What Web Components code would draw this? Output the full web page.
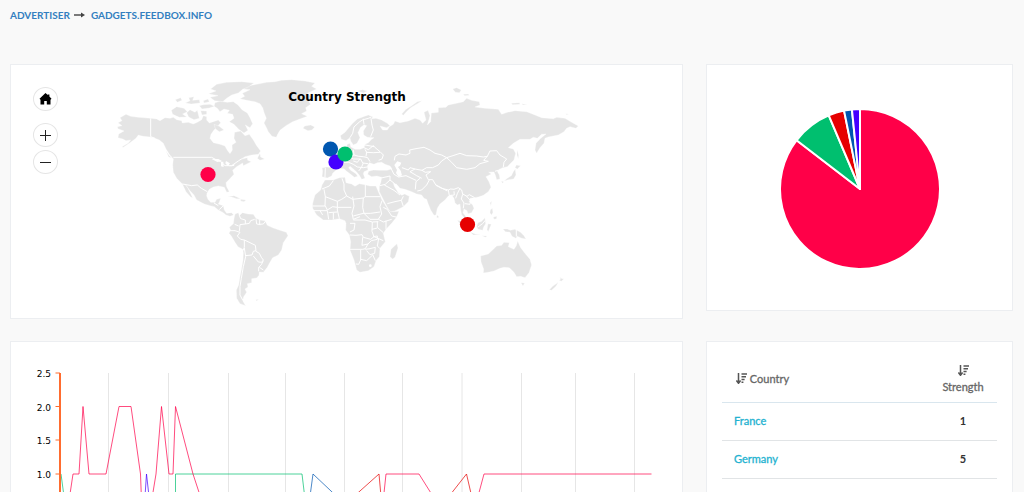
<!DOCTYPE html>
<html lang="en">
<head>
  <meta charset="UTF-8">
  <meta name="viewport" content="width=device-width, initial-scale=1.0">
  <title>Advertiser - gadgets.feedbox.info</title>
  <style>
    body {
      margin: 0;
      background: #f9f9f9;
      font-family: Lato, "Liberation Sans", sans-serif;
      font-size: 11px;
      color: #333;
    }
  </style>
</head>
<body>
  <advertiser-page>
    <bread-crumb slot="header">
      <a href="#advertiser">ADVERTISER</a>
      <a href="#gadgets">GADGETS.FEEDBOX.INFO</a>
    </bread-crumb>
    <panel-card><country-map heading="Country Strength"></country-map></panel-card>
    <panel-card><pie-chart></pie-chart></panel-card>
    <panel-card><line-chart></line-chart></panel-card>
    <panel-card><country-table></country-table></panel-card>
  </advertiser-page>

  <template id="page-template">
    <style>
      :host { display: block; height: 100vh; overflow: auto; scrollbar-width: none; }
      header { height: 64px; padding: 0 10px; box-sizing: border-box; }
      main {
        display: grid;
        grid-template-columns: 673fr 307fr;
        column-gap: 23px;
        row-gap: 22px;
        align-items: start;
        padding: 0 11px 24px 10px;
      }
    </style>
    <header><slot name="header"></slot></header>
    <main><slot></slot></main>
  </template>

  <template id="crumb-template">
    <style>
      :host { display: block; }
      nav { display: flex; align-items: center; height: 29px; font-size: 10px; font-weight: 700; }
      ::slotted(a) { color: #337fc0; text-decoration: none; }
      nav svg { margin: 0 6px 0 4px; }
    </style>
    <nav aria-label="Breadcrumb">
      <slot name="first"></slot>
      <svg width="11" height="8" viewBox="0 0 11 8" aria-hidden="true">
        <path d="M0 4h9" stroke="#444" stroke-width="1.4"/>
        <path d="M7 1.5L11 4 7 6.5z" fill="#444"/>
      </svg>
      <slot></slot>
    </nav>
  </template>

  <template id="card-template">
    <style>
      :host { display: block; background: #fff; border: 1px solid #eceef1; min-width: 0; }
    </style>
    <slot></slot>
  </template>

  <template id="map-template">
    <style>
      :host { display: block; position: relative; }
      .map { display: block; width: 100%; height: auto; }
      .land { fill: #e5e5e5; stroke: #fff; stroke-width: 1; stroke-linejoin: round; }
      .line { fill: none; stroke: #fff; stroke-width: 3; }
      .sea { fill: #fff; stroke: none; }
      text { font: bold 12px "DejaVu Sans", sans-serif; text-anchor: middle; fill: #000; }
      .controls { position: absolute; left: 22px; top: 22px; display: grid; gap: 3px; }
      button {
        width: 25px; height: 24px; padding: 0;
        display: flex; align-items: center; justify-content: center;
        background: #fff; border: 1px solid #e5e5e5; border-radius: 50%;
      }
      .home { margin-bottom: 9px; }
    </style>
    <svg class="map" viewBox="11 65 671 253" role="img" aria-label="World map">
      <g class="land">
        <!-- north america -->
        <g transform="translate(110 75) scale(.3333)">
          <path d="M22 155L36 152 24 143 36 137 30 128 48 118 62 124 85 127 122 130 140 132 150 137 165 128 180 130 190 127 200 134 215 137 217 144 235 142 250 147 262 142 275 134 280 122 290 125 290 135 298 144 310 140 325 135 332 143 322 155 312 165 303 178 300 190 310 203 330 208 345 213 352 226 360 236 367 225 366 210 378 202 372 190 374 172 392 168 405 182 418 178 430 195 440 212 452 228 445 238 425 240 405 245 393 253 412 248 413 256 424 260 412 266 400 272 398 264 380 275 368 286 372 298 358 313 348 323 350 335 358 350 350 352 343 337 325 333 310 336 298 343 291 355 290 363 294 373 302 382 315 382 320 373 332 370 328 382 325 387 340 392 343 405 350 415 365 413 371 420 360 424 348 420 340 413 325 405 313 395 300 392 283 387 260 375 252 360 240 347 225 327 234 340 248 368 242 366 228 350 217 327 200 310 190 292 188 270 190 252 178 238 168 222 160 205 148 195 135 190 120 186 100 184 92 182 85 180 78 190 60 203 40 217 35 216 55 204 62 195 48 197 38 192 24 188 26 177 42 168 24 161z"/>
          <path d="M397 55L420 44 400 42 412 33 440 28 470 22 495 20 515 16 545 14 585 18 615 24 605 34 620 42 592 55 606 65 596 78 602 88 587 98 590 108 575 116 592 124 570 132 548 140 528 152 510 166 503 178 499 187 486 184 475 170 468 155 462 144 469 130 463 115 458 98 450 86 435 80 410 76 390 71 404 64z"/>
          <path d="M295 56L318 48 302 42 320 28 350 22 395 20 432 24 415 36 398 43 385 54 365 60 350 70 338 80 314 77 300 67 324 62z"/>
          <path d="M184 106L200 95 222 100 232 110 218 117 230 126 208 127 188 118zM230 113L240 104 255 112 262 106 268 130 252 134 236 126zM315 83L330 79 352 82 370 80 384 90 396 104 412 114 420 128 428 146 420 158 406 150 414 166 402 174 386 163 372 148 358 140 372 130 368 118 352 115 358 106 342 102 330 110 322 100 312 94zM268 92L280 89 300 88 314 94 298 99 276 102zM196 74L212 68 216 76 202 82zM236 68L252 65 248 76 268 74 270 84 244 87 226 84 240 77zM280 77L294 72 298 80 282 84zM312 148L328 154 342 165 328 170 316 161zM272 107L290 108 290 118 276 120zM442 250L450 235 452 246 464 252 450 256zM22 144L8 148M168 228L178 242 186 248 176 246z"/>
          <path d="M579 160L584 153 602 150 614 156 606 165 594 167zM352 365L372 362 392 371 380 371 365 366zM392 373L408 375 402 380 392 378z"/>
          <path class="line" d="M122 130V185L135 190M190 247H305L318 254 332 260 345 272 365 272 385 258 394 252M217 327L245 332 262 330 274 340 292 350M312 384L325 392M340 392L328 404"/>
          <path class="sea" d="M305 252L325 252 336 258 322 261zM333 260L340 260 341 276 333 274zM348 258L360 265 354 274 346 265zM356 274L374 268 372 273z"/>
        </g>
        <!-- south america -->
        <g transform="translate(210 190) scale(.3333)">
          <path d="M75 72L85 68 88 77 97 68 115 72 130 73 138 85 150 90 165 92 172 106 190 114 210 121 229 127 234 137 220 158 215 180 205 195 188 203 180 217 172 232 160 247 148 246 147 256 140 264 125 266 125 278 112 281 114 291 105 297 110 307 101 320 98 332 107 347 90 341 80 325 79 300 86 285 90 260 95 235 99 210 100 188 98 178 84 170 75 157 64 138 57 130 62 120 58 112 70 101 72 86zM137 329L146 328 140 333z"/>
          <path class="line" d="M88 76L92 86 106 90 106 102 90 104 88 124M60 122L75 122 90 127 82 138 92 148 103 150 103 172 99 182M106 102L118 100 122 92 134 88M138 86L140 102 151 104M149 88V103L160 102 167 93M103 150L120 158 136 166 138 182 130 184 126 195 105 197M138 184L148 190 154 202 160 210 155 217 145 216 130 198M160 212L154 224 146 232 146 244M103 174L107 200 100 230 94 265 90 290 90 315 98 330M74 103L86 108M148 232L160 240"/>
        </g>
        <!-- europe and asia -->
        <g transform="translate(300 75) scale(.3333)">
          <path d="M66 305L68 287 66 279 80 276 98 278 99 262 88 250 105 248 115 240 125 228 138 222 142 208 150 205 152 215 165 223 180 223 192 218 195 208 205 203 215 193 222 188 202 187 191 180 190 168 200 152 192 149 181 158 174 173 180 188 171 205 160 210 152 198 150 188 138 197 124 193 121 182 135 172 145 160 158 145 172 132 190 125 205 120 218 125 216 131 228 130 245 135 262 145 270 152 260 158 240 153 248 165 262 165 268 155 280 148 285 138 300 143 325 138 345 130 360 135 368 145 378 135 372 112 384 106 390 122 382 150 392 140 394 114 415 112 415 98 438 97 445 90 470 85 490 80 500 70 515 76 538 80 540 90 525 96 555 100 595 103 605 118 622 112 645 107 680 110 705 120 725 128 760 131 770 127 795 130 815 142 835 153 828 160 810 155 800 160 792 170 775 180 745 186 735 190 732 205 720 218 710 235 705 225 708 205 720 192 738 177 725 178 712 190 700 187 690 193 660 193 640 205 625 218 640 222 647 235 642 255 622 275 608 278 596 284 592 289 598 300 600 312 590 314 586 300 582 291 566 292 574 297 558 305 567 320 573 337 565 350 550 361 535 366 524 368 511 370 508 380 518 390 522 400 515 413 504 416 501 407 492 402 489 413 496 422 503 435 495 431 485 419 482 405 480 387 472 390 465 383 462 370 455 360 445 363 435 375 420 387 412 400 408 420 402 421 392 405 384 385 380 373 372 370 365 360 350 357 335 350 315 343 300 340 290 328 280 325 284 336 295 353 305 361 314 357 328 364 325 380 310 395 285 408 271 412 258 390 248 370 238 350 238 335 243 320 245 307 230 303 215 305 203 298 206 289 220 285 240 286 262 286 276 281 270 273 255 268 245 262 232 263 222 268 208 263 202 273 204 285 192 290 190 296 195 310 185 313 178 301 170 291 160 282 150 274 146 278 152 286 168 296 173 304 163 307 152 298 140 289 132 281 118 281 108 286 98 295 95 303 82 309z"/>
          <path d="M305 117L318 103 335 92 352 80 366 77 352 86 332 98 318 112 310 121zM100 219L95 232 88 247 108 241 107 228zM78 232L90 230 88 240 78 242zM172 47L188 44 202 48 190 54zM285 48L298 49 290 52zM458 42L470 38 484 45 478 53 466 52zM490 58L505 57 508 61 494 62zM634 85L658 83 660 88 638 89zM666 86L682 89 668 90zM797 116L806 117 800 119zM651 224L656 240 655 252 651 240zM649 270L662 272 652 282 645 278zM646 282L648 300 641 312 625 314 612 318 622 310 634 302 640 290zM604 318L612 320 607 325zM570 384L575 378 573 392zM571 405L577 400 579 412 575 420 570 414zM580 426L591 424 589 432 582 433z"/>
          <path d="M411 420L416 424 415 430 410 427zM472 436L482 438 495 448 508 462 507 468 492 458 480 446zM510 471L528 478 542 480 520 480zM530 454L534 443 545 439 555 428 557 446 551 456 548 466 534 463zM564 446L574 448 568 462 565 470 561 464zM609 462L622 462 631 466 645 463 662 472 672 482 678 492 665 490 652 484 648 490 636 484 630 472 616 470zM546 482L562 483 556 487z"/>
          <path d="M542 543L565 537 580 523 590 513 605 511 612 502 628 503 625 515 642 523 649 512 653 498 662 518 675 535 690 553 695 570 687 593 675 608 662 604 650 605 642 592 636 586 628 578 612 577 600 580 582 588 565 592 550 594 551 582 543 560zM663 623L674 624 669 633zM779 606L786 611 792 611 784 619 778 616 782 612zM775 622L768 634 755 646 748 644 758 634z"/>
          <path class="sea" d="M283 270L292 259 304 263 300 272 294 276 302 287 306 301 296 305 288 294 291 285z"/>
          <path class="line" d="M150 188L158 175 162 156 178 141 192 132M192 148L190 134 205 130 214 126M213 130L216 150 220 165 212 185M195 210L212 213 222 215M195 223L200 232 198 244M192 218L205 224 220 212 228 220 240 230 250 240 246 252 236 256M160 224L162 240 176 244 190 245 203 248 210 260M162 240L152 246 160 252 182 252 188 264 204 266M118 240L120 252 128 262 146 262 160 268 172 276 190 278 202 276M98 278L112 283M76 279L75 307M180 252L172 262 160 258M190 264L184 278 176 288M198 232L220 233 240 232M283 256L285 244 297 237 318 240 330 235 329 225 348 221 372 217 390 225 405 235 425 240 440 248 465 240 480 235 500 242 530 243 550 246 562 244 570 228 590 227 600 240 620 252 612 262 610 276M440 248L455 262 470 278 500 283 525 278 540 266 565 259 551 256 562 244M440 248L425 258 415 270 398 278 380 278 366 286 345 282 330 278 325 285 306 278M345 282L330 290 350 302 365 310M366 286L376 292 392 290 378 300 385 314 398 314 408 331 425 340 445 345 452 342 462 343 475 338 485 345 488 357 501 364 508 359 524 368M360 310L348 320 346 343M388 315L380 330 365 345 352 348M408 330L442 348M445 345L448 362 463 360 462 349M480 340L472 356 467 370M488 358L484 372 492 384 490 400M500 364L512 377 510 388 495 386M274 282L282 298 296 306 318 302 348 316M244 309L270 303 270 315 256 328 240 332M270 315L284 326M253 330L282 346 300 360M262 386L285 380 304 376 310 394M304 376L310 364M649 463V485M594 286L585 289M534 456L548 446 556 436"/>
        </g>
        <!-- africa -->
        <g transform="translate(300 170) scale(.3333)">
          <path d="M75 30L100 30 118 23 135 22 138 38 155 42 165 49 178 41 195 44 210 48 228 48 235 65 245 88 262 115 272 125 297 124 290 141 275 160 258 178 250 190 256 215 240 235 238 260 228 272 222 290 205 302 180 307 170 300 162 270 150 240 152 215 148 195 137 180 138 160 135 152 118 146 95 150 70 150 50 135 38 115 38 100 45 75 62 60 66 45zM291 221L294 234 285 262 278 267 270 260 273 238z"/>
          <path class="line" d="M38 108H75L76 80 112 94 125 88 140 78 132 60 132 42 126 25M72 58L76 80M66 57L88 48 100 32M140 78L158 88 190 84 196 80V44M196 80H240M158 80L162 108 156 130 160 148M112 94V112L154 112M112 112L112 120 118 146M76 108L82 120 98 110 112 112M40 122H60L68 135M60 122L82 122 86 148M100 128V148M86 128L112 126M190 84L188 112 192 130 210 148 235 148 245 132 240 110 246 92M190 130L212 130 240 126M160 138L190 130M160 148L180 140M250 112L262 118 275 138 292 142M235 148L250 156 275 148M232 155V172L250 188M218 156L235 155M258 152V178M160 150L195 150 217 156 216 184 222 200 212 208 190 202 186 194 168 196 150 195M150 160H165L162 180 150 186M216 178L232 174M222 200L250 212M188 202L186 226 204 222 214 212 232 208 232 198 220 200M150 238H188L196 236 204 222M182 240V270L176 283 168 282M182 268L200 272 218 255M196 238L210 236 226 232 224 250 210 254 200 242M236 206L232 228 240 236M218 254L226 272"/>
          <circle class="sea" cx="211" cy="287" r="4"/>
        </g>
      </g>
      <text x="347" y="101"></text>
      <g id="dots"></g>
    </svg>
    <div class="controls">
      <button class="home" type="button" aria-label="Home">
        <svg width="13" height="12" viewBox="0 0 13 12"><path d="M6.5 0L8.8 2.1V1.4H10.4V3.6L12.5 5.7 11.5 6.8V11.5H7.8V8H5.2V11.5H1.5V6.8L.5 5.7z"/></svg>
      </button>
      <button type="button" aria-label="Zoom in">
        <svg width="11" height="11" viewBox="0 0 11 11"><path d="M0 5.5H11M5.5 0V11" stroke="#222"/></svg>
      </button>
      <button type="button" aria-label="Zoom out">
        <svg width="11" height="11" viewBox="0 0 11 11"><path d="M0 5.5H11" stroke="#222"/></svg>
      </button>
    </div>
  </template>

  <template id="pie-template">
    <style>
      :host { display: block; padding: 43px 0 40px; }
      svg { display: block; width: 162px; margin: 0 auto; }
      path { stroke: #fff; stroke-width: 2; stroke-linejoin: round; }
    </style>
    <svg viewBox="-81 -81 162 162" role="img" aria-label="Strength by country"></svg>
  </template>

  <template id="line-template">
    <style>
      :host { display: block; }
      svg { display: block; width: 100%; height: auto; }
      .grid { stroke: #e6e6e6; fill: none; }
      .series { fill: none; stroke-opacity: .7; stroke-linejoin: round; }
      .axis { stroke: #ff6c2f; fill: none; }
      text { font: 9px "DejaVu Sans", sans-serif; text-anchor: end; fill: #000; }
    </style>
    <svg viewBox="11 342 671 220" role="img" aria-label="Strength over time">
      <path class="grid"/>
      <g id="series"></g>
      <path class="axis" stroke-width="2" d="M60 373V542"/>
      <g id="scale"></g>
    </svg>
  </template>

  <template id="table-template">
    <style>
      :host { display: block; padding: 15px; }
      table { width: 100%; border-collapse: collapse; table-layout: fixed; }
      th, td {
        height: 35px; padding: 0 12px 2px; text-align: left;
        border-bottom: 1px solid #e1e4e6;
      }
      th { height: 43px; border-bottom-color: #d9e6ee; }
      th:last-child, td:last-child {
        width: 68px; padding-left: 0; padding-right: 0; text-align: center;
      }
      button {
        padding: 0 2px; border: 0; background: none; color: #666;
        font: 11px/16px Lato, sans-serif;
      }
      button, a { -webkit-text-stroke: .3px; }
      td:last-child { font-weight: 700; }
      a { color: #23b2d0; text-decoration: none; }
      svg { vertical-align: -1px; }
      th:last-child button { width: 50px; }
    </style>
    <table>
      <thead><tr></tr></thead>
      <tbody></tbody>
    </table>
  </template>

  <script>
  class TemplateElement extends HTMLElement {
    constructor(id) {
      super();
      this.attachShadow({ mode: 'open' });
      this.shadowRoot.appendChild(document.getElementById(id).content.cloneNode(true));
    }

    find(selector) {
      return this.shadowRoot.querySelector(selector);
    }
  }

  class AdvertiserPage extends TemplateElement {
    constructor() { super('page-template'); }
  }

  class BreadCrumb extends TemplateElement {
    constructor() { super('crumb-template'); }

    connectedCallback() {
      this.querySelector('a').slot = 'first';
    }
  }

  class PanelCard extends TemplateElement {
    constructor() { super('card-template'); }
  }

  class CountryMap extends TemplateElement {
    constructor() { super('map-template'); }

    connectedCallback() {
      this.find('text').textContent = this.getAttribute('heading');
      var dots = [
        [208, 174.5, '#ff0048'],
        [330.5, 149, '#0057b0'],
        [336, 162, '#4400ff'],
        [345, 154, '#00bf6f'],
        [467.5, 224.5, '#e60000']
      ];
      this.find('#dots').innerHTML = dots.map(d =>
        `<circle cx="${d[0]}" cy="${d[1]}" r="7.6" fill="${d[2]}"/>`).join('');
    }
  }

  class PieChart extends TemplateElement {
    constructor() { super('pie-template'); }

    connectedCallback() {
      // start angle, end angle, colour
      var slices = [
        [0, 307.5, '#ff0048'],
        [307.5, 337, '#00bf6f'],
        [337, 348.5, '#e60000'],
        [348.5, 354.2, '#0057b0'],
        [354.2, 360, '#4400ff']
      ];
      var point = a => {
        var r = a * Math.PI / 180;
        return (80 * Math.sin(r)).toFixed(2) + ' ' + (-80 * Math.cos(r)).toFixed(2);
      };
      this.find('svg').innerHTML = slices.map(([from, to, color]) =>
        `<path fill="${color}" d="M0 0L${point(from)}A80 80 0 ${to - from > 180 ? 1 : 0} 1 ${point(to)}z"/>`).join('');
    }
  }

  class LineChart extends TemplateElement {
    constructor() { super('line-template'); }

    connectedCallback() {
      var grid = [108.5, 168.5, 228.5, 285.5, 344.5, 402.5, 462, 521.5, 575.5, 634.5];
      this.find('.grid').setAttribute('d', grid.map(x => `M${x} 373V542`).join(''));

      var series = [
        ['#00bf6f', 'M61 474L70 541M175.5 541V474H302L310 541'],
        ['#4400ff', 'M142 541L146.5 474 154 541'],
        ['#0057b0', 'M304 541L313 474 384 541'],
        ['#e60000', 'M304 541L379 474 385 541M414 541L466.5 474 482 541'],
        ['#ff0048', 'M63 541L73 474H79L83 406.5 89 474H106L119 406.5H131L140.5 474 143 541M145 541L156 474 161.5 406.5 169 474H173L175.5 406.5 193 474 215 541M379 541L386 474H419L461 541M466 541L484 474H651.5']
      ];
      this.find('#series').innerHTML = series.map(s =>
        `<path class="series" stroke="${s[0]}" d="${s[1]}"/>`).join('');

      var scale = [['2.5', 373], ['2.0', 406.5], ['1.5', 440], ['1.0', 474]];
      this.find('#scale').innerHTML = scale.map(([label, y]) =>
        `<path class="axis" d="M55.5 ${y}H60"/><text x="51" y="${y + 4}">${label}</text>`).join('');
    }
  }

  class CountryTable extends TemplateElement {
    constructor() { super('table-template'); }

    connectedCallback() {
      var icon = '<svg width="11" height="11" viewBox="0 0 11 11" aria-hidden="true"><path d="M2.5 0V9M.4 7.5L2.5 10.3 4.6 7.5" fill="none" stroke="#555" stroke-width="1.5"/><path d="M5.5 1H11M5.5 3.8H10M5.5 6.6H8.6M5.5 9.2H7.4" stroke="#555" stroke-width="1.5"/></svg>';
      this.find('thead tr').innerHTML = ['Country', 'Strength'].map(name =>
        `<th scope="col"><button type="button">${icon} ${name}</button></th>`).join('');

      var rows = [['France', 1], ['Germany', 5]];
      this.find('tbody').innerHTML = rows.map(([name, strength]) =>
        `<tr><td><a href="#${name}">${name}</a></td><td>${strength}</td></tr>`).join('');
    }
  }

  customElements.define('advertiser-page', AdvertiserPage);
  customElements.define('bread-crumb', BreadCrumb);
  customElements.define('panel-card', PanelCard);
  customElements.define('country-map', CountryMap);
  customElements.define('pie-chart', PieChart);
  customElements.define('line-chart', LineChart);
  customElements.define('country-table', CountryTable);
  </script>
</body>
</html>
